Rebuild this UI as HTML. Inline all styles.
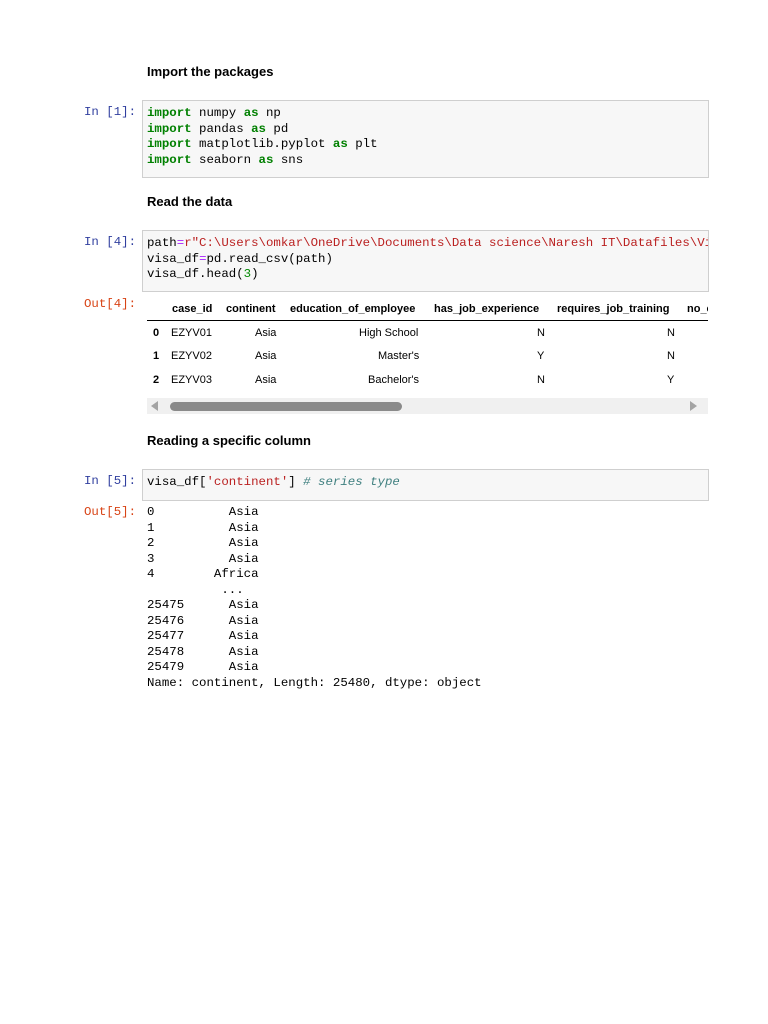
<!DOCTYPE html>
<html><head><meta charset="utf-8"><style>
body{margin:0;width:768px;height:1024px;background:#fff;position:relative;overflow:hidden;font-family:"Liberation Sans",sans-serif;}
.a{position:absolute;white-space:pre;}
.h{font-weight:bold;font-size:13px;color:#000;}
.p{font-family:"Liberation Mono",monospace;font-size:12.4px;line-height:15.5px;}
.in{color:#303f9f;}
.out{color:#d84315;}
.box{position:absolute;left:142px;width:565px;border:1px solid #cfcfcf;background:#f7f7f7;overflow:hidden;}
.code{position:absolute;left:4px;font-family:"Liberation Mono",monospace;font-size:12.4px;line-height:15.5px;white-space:pre;color:#000;}
.k{color:#008000;font-weight:bold;}
.s{color:#ba2121;}
.n{color:#080;}
.c{color:#408080;font-style:italic;}
.o{color:#aa22ff;}
.t{position:absolute;font-size:11px;white-space:pre;color:#000;}
.b{font-weight:bold;}
</style></head><body>
<div class="a h" style="left:147px;top:64px">Import the packages</div>
<div class="a p in" style="left:84px;top:105px">In [1]:</div>
<div class="box" style="top:100px;height:76px"><div class="code" style="top:5px"><span class="k">import</span> numpy <span class="k">as</span> np
<span class="k">import</span> pandas <span class="k">as</span> pd
<span class="k">import</span> matplotlib.pyplot <span class="k">as</span> plt
<span class="k">import</span> seaborn <span class="k">as</span> sns</div></div>

<div class="a h" style="left:147px;top:194px">Read the data</div>
<div class="a p in" style="left:84px;top:235px">In [4]:</div>
<div class="box" style="top:230px;height:60px"><div class="code" style="top:5px">path<span class="o">=</span><span class="s">r"C:\Users\omkar\OneDrive\Documents\Data science\Naresh IT\Datafiles\Visa.csv"</span>
visa_df<span class="o">=</span>pd.read_csv(path)
visa_df.head(<span class="n">3</span>)</div></div>

<div class="a p out" style="left:84px;top:297px">Out[4]:</div>
<div style="position:absolute;left:147px;top:296px;width:561px;height:120px;overflow:hidden">
<div class="t b" style="left:25px;top:7px">case_id</div>
<div class="t b" style="left:79px;top:7px">continent</div>
<div class="t b" style="left:143px;top:7px">education_of_employee</div>
<div class="t b" style="left:287px;top:7px">has_job_experience</div>
<div class="t b" style="left:410px;top:7px">requires_job_training</div>
<div class="t b" style="left:540px;top:7px">no_of_employees</div>
<div style="position:absolute;left:0;top:24px;width:561px;height:1px;background:#000"></div>
<div class="t b" style="left:6px;top:31px">0</div><div class="t" style="left:24px;top:31px">EZYV01</div><div class="t" style="left:108px;top:31px">Asia</div><div class="t" style="left:212px;top:31px">High School</div><div class="t" style="left:390px;top:31px">N</div><div class="t" style="left:520px;top:31px">N</div>
<div class="t b" style="left:6px;top:54px">1</div><div class="t" style="left:24px;top:54px">EZYV02</div><div class="t" style="left:108px;top:54px">Asia</div><div class="t" style="left:231px;top:54px">Master's</div><div class="t" style="left:390px;top:54px">Y</div><div class="t" style="left:520px;top:54px">N</div>
<div class="t b" style="left:6px;top:78px">2</div><div class="t" style="left:24px;top:78px">EZYV03</div><div class="t" style="left:108px;top:78px">Asia</div><div class="t" style="left:221px;top:78px">Bachelor's</div><div class="t" style="left:390px;top:78px">N</div><div class="t" style="left:520px;top:78px">Y</div>
<div style="position:absolute;left:0;top:102px;width:561px;height:16px;background:#f0f0f0"></div>
<div style="position:absolute;left:4px;top:105px;width:0;height:0;border-top:5px solid transparent;border-bottom:5px solid transparent;border-right:7px solid #a3a3a3"></div>
<div style="position:absolute;left:543px;top:105px;width:0;height:0;border-top:5px solid transparent;border-bottom:5px solid transparent;border-left:7px solid #a3a3a3"></div>
<div style="position:absolute;left:23px;top:106px;width:232px;height:9px;border-radius:5px;background:#8a8a8a"></div>
</div>

<div class="a h" style="left:147px;top:433px">Reading a specific column</div>
<div class="a p in" style="left:84px;top:474px">In [5]:</div>
<div class="box" style="top:469px;height:30px"><div class="code" style="top:5px">visa_df[<span class="s">'continent'</span>] <span class="c"># series type</span></div></div>

<div class="a p out" style="left:84px;top:505px">Out[5]:</div>
<div class="a p" style="left:147px;top:505px;color:#000">0          Asia
1          Asia
2          Asia
3          Asia
4        Africa
          ...
25475      Asia
25476      Asia
25477      Asia
25478      Asia
25479      Asia
Name: continent, Length: 25480, dtype: object</div>
</body></html>
